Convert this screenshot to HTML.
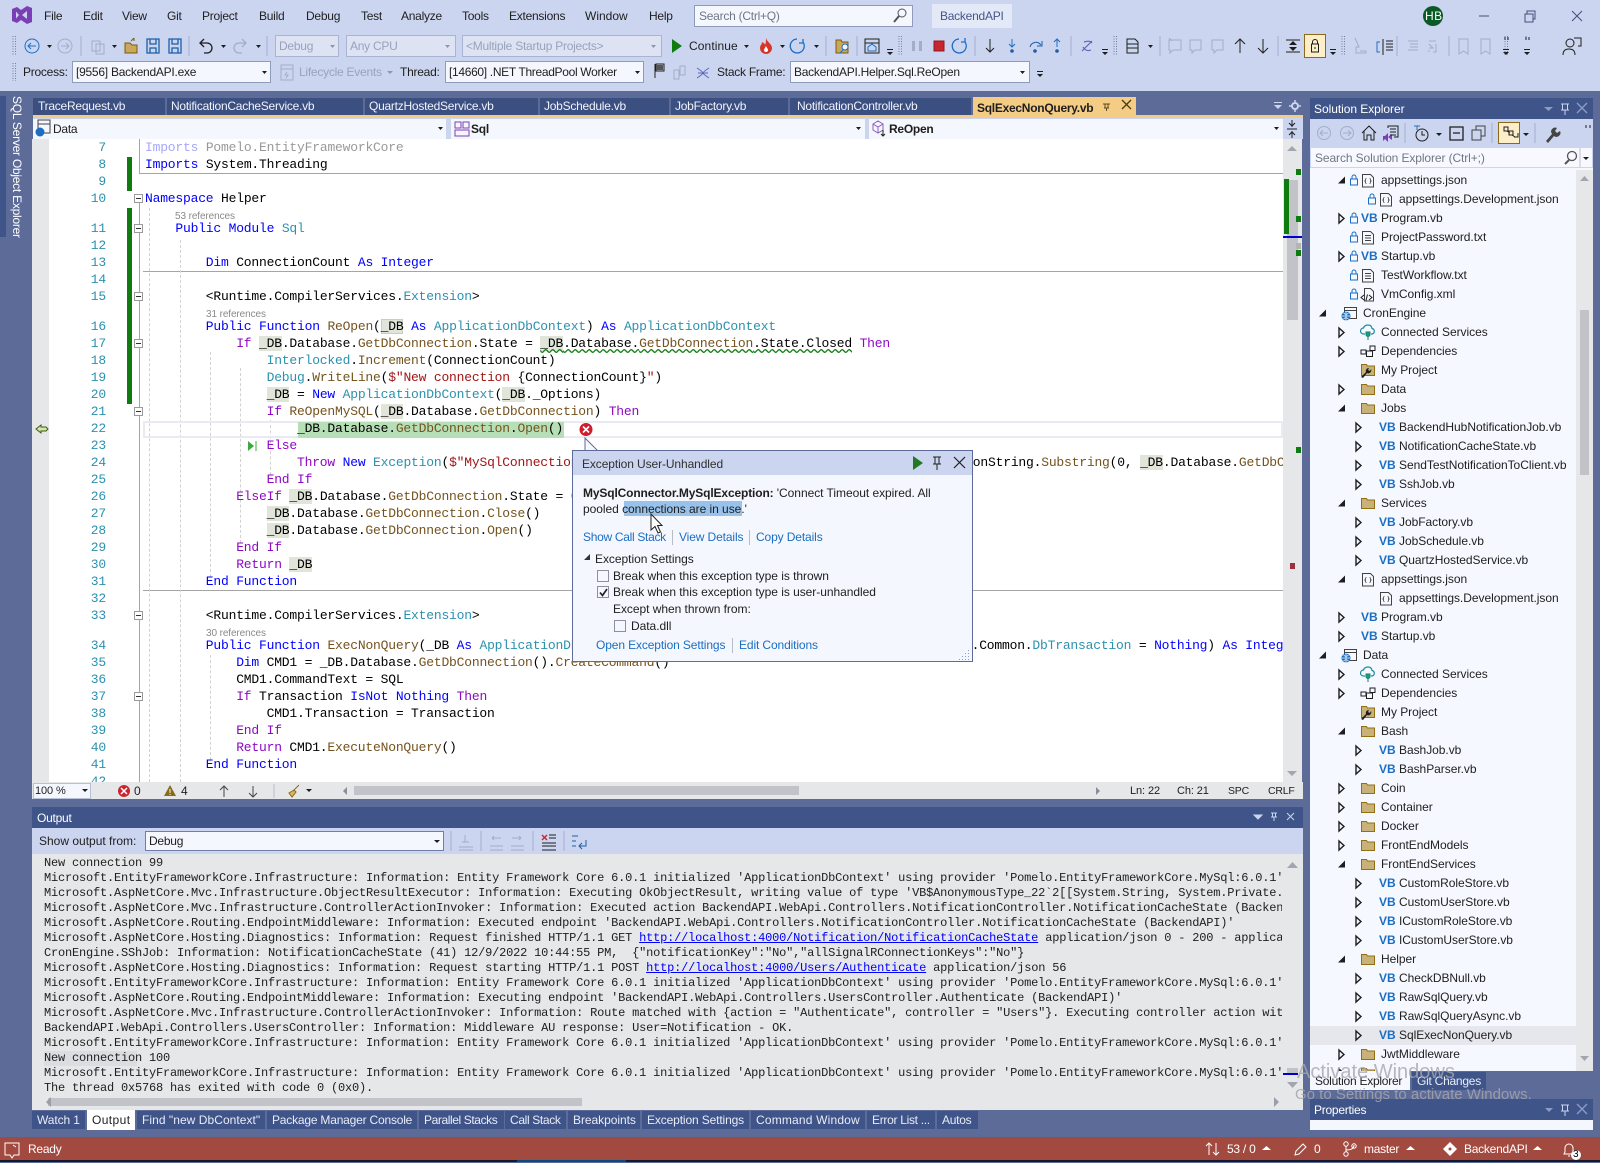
<!DOCTYPE html>
<html><head><meta charset="utf-8"><title>BackendAPI</title>
<style>
html,body{margin:0;padding:0}
body{width:1600px;height:1162px;overflow:hidden;position:relative;background:#5d6b99;font:12px/16px "Liberation Sans",sans-serif;letter-spacing:-.25px;color:#1e1e1e}
div{box-sizing:border-box}
.p{position:absolute}
.t{position:absolute;white-space:nowrap;line-height:16px}
.m{top:8px}.r2{top:38px}.r3{top:64px}
.dis{color:#98a2bc}
.cb{position:absolute;background:#f5f7fe;border:1px solid #8e9bbc;height:22px}
.cd{position:absolute;background:#dde3f3;border:1px solid #a9b4d2;height:22px}
.tab{position:absolute;top:98px;height:17px;background:#3b4f81;color:#f0f3fc;line-height:17px;white-space:nowrap}
.btab{position:absolute;top:1111px;height:18px;background:#3f5489;color:#e8ecf8;line-height:19px;padding-left:5px;white-space:nowrap}
.hdr{position:absolute;background:#3f5489;color:#fff}
#ed{position:absolute;left:0;top:0;width:1283px;height:782px;overflow:hidden;font:13px/17px "Liberation Mono",monospace;letter-spacing:-.2px;color:#000}
#ed .l{position:absolute;white-space:pre;height:17px}
#ed .n{position:absolute;left:60px;width:46px;text-align:right;color:#2b91af;height:17px}
.i0{left:145px}.i1{left:175.4px}.i2{left:205.8px}.i3{left:236.2px}.i4{left:266.6px}.i5{left:297px}
b{font-weight:normal}
b.k{color:#00f}b.y{color:#2b91af}b.f{color:#74531f}b.s{color:#a31515}b.c{color:#8f08c4}
i{font-style:normal;background:#e0e4d9}
i.o{box-shadow:inset 0 0 0 1px #c9cdbf}
.lens{position:absolute;font:10px/12px "Liberation Sans",sans-serif;color:#8a8a8a;letter-spacing:-.1px}
.g{position:absolute;width:0;border-left:1px dashed #d2d2d2}
.ob{position:absolute;left:134px;width:9px;height:9px;background:#fff;border:1px solid #9a9a9a}
.ob:after{content:"";position:absolute;left:1px;top:3px;width:5px;height:1px;background:#333}
#out{position:absolute;left:44px;top:855.5px;width:1238px;height:241px;overflow:hidden;font:12px/15px "Liberation Mono",monospace;letter-spacing:-.2px;color:#1e1e1e;white-space:pre}
#out a{color:#00f;text-decoration:underline}
#tree{position:absolute;left:1310px;top:170.5px;width:266px;height:900.5px;overflow:hidden;background:#f6f8ff;letter-spacing:-.04px}
.r{position:relative;height:19px;line-height:19px;white-space:nowrap}
.r svg{position:absolute;left:0;top:0;width:266px;height:19px}
.r span{position:absolute;top:0}
.r em{position:absolute;top:0;font:bold 12px/19px "Liberation Sans",sans-serif;color:#1b6ec2;letter-spacing:0}
.x0{left:53px}.x1{left:71px}.x2{left:89px}
.v1{left:51px}.v2{left:69px}
#pop{position:absolute;left:572px;top:450px;width:401px;height:212px;background:#f5f7fe;border:1px solid #5d6b99;letter-spacing:-.04px}
#pop .h{position:absolute;left:0;top:0;width:399px;height:24px;background:#ccd5f0}
.lnk{color:#1b6ec2;letter-spacing:-.12px}
.chk{position:absolute;width:12px;height:12px;border:1px solid #8e8e9e;background:#f5f7fe}
.sm{font-size:11px;letter-spacing:-.1px}
.sx{font-size:10.500px;letter-spacing:-.2px}
</style></head><body>
<svg width="0" height="0" style="position:absolute"><defs>
<g id="c"><path d="M-3 5l5 4.5-5 4.5z" transform="translate(0,0)" fill="#f6f8ff" stroke="#1e1e1e" stroke-width="1.4"/></g>
<g id="e"><path d="M3 5.5v7h-7z" fill="#1e1e1e"/></g>
<g id="lk"><path d="M-2 8V6a2 2 0 0 1 4 0v2" fill="none" stroke="#1b6ec2"/><rect x="-3.5" y="8" width="7" height="6" fill="#f6f8ff" stroke="#1b6ec2"/></g>
<g id="fo"><path d="M-6.500 4.500h5l1 1.500h7v8.500h-13z" fill="#c9b27a" stroke="#93700f"/></g>
<g id="js"><path d="M-5.500 3.500h8l3 3v9.500h-11z" fill="#f6f8ff" stroke="#424242"/><path d="M-1.500 7.500q-1 0-1 1v1l-.8.5.8.5v1q0 1 1 1M1.500 7.500q1 0 1 1v1l.8.5-.8.5v1q0 1-1 1" fill="none" stroke="#424242" stroke-width=".8"/></g>
<g id="tx"><path d="M-5.500 3.500h8l3 3v9.500h-11z" fill="#f6f8ff" stroke="#424242"/><path d="M-3 7.500h6M-3 10h6M-3 12.500h6" stroke="#424242"/></g>
<g id="xm"><path d="M-3.500 3.500h6l3 3v9.500h-9z" fill="#f6f8ff" stroke="#424242"/><path d="M-4 10l-3 2.500 3 2.500M1 10l3 2.500-3 2.500M-.5 9.500l-1.500 6" fill="none" stroke="#1e1e1e"/></g>
<g id="pr"><rect x="-5.500" y="3.500" width="12" height="11" fill="#f6f8ff" stroke="#424242"/><path d="M-5.500 6.500h12" stroke="#424242"/><circle cx="-4" cy="12" r="4.500" fill="#1b6ec2"/><path d="M-8 12h8M-4 7.500v9M-6.500 9q2.500 2.500 5 0M-6.500 15q2.500-2.500 5 0" fill="none" stroke="#fff" stroke-width=".7"/></g>
<g id="cs"><path d="M-3 11h-1.500a3 3 0 0 1 0-6q1-3 4.500-3t4 3.500a2.800 2.800 0 0 1 0 5.500H3" fill="none" stroke="#1c8a96" stroke-width="1.200"/><path d="M-2 9h4v2.500a2 2 0 0 1-4 0zM0 13.500V17" fill="#16a085" stroke="#16806f"/></g>
<g id="dp"><rect x="-7" y="8" width="5" height="4" fill="none" stroke="#1e1e1e"/><rect x="-1.500" y="9" width="6" height="5.500" fill="none" stroke="#1e1e1e"/><rect x="2" y="4" width="5" height="4.500" fill="none" stroke="#1e1e1e"/><path d="M-2 10h1M3 8.500v.5" stroke="#1e1e1e"/></g>
<g id="mp"><path d="M-6.500 3.500h5l1 1.500h7v9.500h-13z" fill="#c9b27a" stroke="#93700f"/><path d="M-7 16l5-5a3 3 0 0 1 3-4l-1 2 2 1 1-2a3 3 0 0 1-4 4l-4 5z" fill="#1e1e1e"/></g>
</defs></svg>

<!-- top chrome -->
<div class="p" style="left:0;top:0;width:1600px;height:91px;background:#ccd5f0"></div>
<div class="t m" style="left:44px">File</div><div class="t m" style="left:83px">Edit</div><div class="t m" style="left:122px">View</div><div class="t m" style="left:167px">Git</div><div class="t m" style="left:202px">Project</div><div class="t m" style="left:259px">Build</div><div class="t m" style="left:306px">Debug</div><div class="t m" style="left:361px">Test</div><div class="t m" style="left:401px">Analyze</div><div class="t m" style="left:462px">Tools</div><div class="t m" style="left:509px">Extensions</div><div class="t m" style="left:585px;letter-spacing:0">Window</div><div class="t m" style="left:649px">Help</div>
<div class="p" style="left:694px;top:5px;width:219px;height:22px;background:#f5f7fe;border:1px solid #8e9bbc"></div>
<div class="t m" style="left:699px;color:#6f7686">Search (Ctrl+Q)</div>
<div class="p" style="left:932px;top:4px;width:80px;height:24px;background:#e4e9f8"></div>
<div class="t m" style="left:940px;color:#46568a">BackendAPI</div>
<div class="p" style="left:1423px;top:6px;width:20px;height:20px;border-radius:50%;background:#0b5a26"></div>
<div class="t m" style="left:1425px;color:#fff;letter-spacing:.4px;font-size:12px">HB</div>

<!-- combos row 2 -->
<div class="cd" style="left:275px;top:35px;width:64px"></div><div class="t r2 dis" style="left:279px">Debug</div>
<div class="cd" style="left:346px;top:35px;width:110px"></div><div class="t r2 dis" style="left:350px">Any CPU</div>
<div class="cd" style="left:462px;top:35px;width:200px"></div><div class="t r2 dis" style="left:466px">&lt;Multiple Startup Projects&gt;</div>
<div class="t r2" style="left:689px;letter-spacing:.1px">Continue</div>
<!-- row 3 -->
<div class="t r3" style="left:23px">Process:</div>
<div class="cb" style="left:72px;top:61px;width:199px"></div><div class="t r3" style="left:76px">[9556] BackendAPI.exe</div>
<div class="t r3 dis" style="left:299px">Lifecycle Events</div>
<div class="t r3" style="left:400px">Thread:</div>
<div class="cb" style="left:445px;top:61px;width:199px"></div><div class="t r3" style="left:449px;letter-spacing:-.32px">[14660] .NET ThreadPool Worker</div>
<div class="t r3" style="left:717px">Stack Frame:</div>
<div class="cb" style="left:790px;top:61px;width:240px"></div><div class="t r3" style="left:794px">BackendAPI.Helper.Sql.ReOpen</div>

<!-- left rail -->
<div class="p" style="left:0;top:96px;width:6px;height:141px;background:#3f5489"></div>
<div class="p" style="left:9px;top:96px;color:#fff;writing-mode:vertical-rl;white-space:nowrap;line-height:15px">SQL Server Object Explorer</div>

<!-- doc tabs -->
<div class="tab" style="left:33px;width:132px;padding-left:5px">TraceRequest.vb</div>
<div class="tab" style="left:167px;width:196px;padding-left:4px">NotificationCacheService.vb</div>
<div class="tab" style="left:365px;width:173px;padding-left:4px">QuartzHostedService.vb</div>
<div class="tab" style="left:540px;width:129px;padding-left:4px">JobSchedule.vb</div>
<div class="tab" style="left:671px;width:117px;padding-left:4px">JobFactory.vb</div>
<div class="tab" style="left:790px;width:181px;padding-left:7px">NotificationController.vb</div>
<div class="p" style="left:33px;top:115px;width:1270px;height:3px;background:#f5cc84"></div>
<div class="p" style="left:973px;top:97px;width:163px;height:21px;background:#f5cc84"></div>
<div class="t" style="left:977px;top:100px;font-weight:bold;letter-spacing:-.27px">SqlExecNonQuery.vb</div>

<!-- nav bar -->
<div class="p" style="left:33px;top:118px;width:1270px;height:21px;background:#ccd5f0"></div>
<div class="p" style="left:33px;top:119px;width:413px;height:20px;background:#f5f7fe"></div>
<div class="p" style="left:451px;top:119px;width:414px;height:20px;background:#f5f7fe"></div>
<div class="p" style="left:869px;top:119px;width:414px;height:20px;background:#f5f7fe"></div>
<div class="t" style="left:53px;top:121px">Data</div>
<div class="t" style="left:471px;top:121px;font-weight:bold">Sql</div>
<div class="t" style="left:889px;top:121px;font-weight:bold">ReOpen</div>

<!-- editor -->
<div class="p" style="left:32px;top:139px;width:17px;height:643px;background:#e6e7e8"></div>
<div class="p" style="left:49px;top:139px;width:1234px;height:643px;background:#fff"></div>
<div class="p" style="left:1283px;top:139px;width:19px;height:643px;background:#e6e7e8"></div>
<div class="p" style="left:1287px;top:180px;width:11px;height:140px;background:#c2c3c9"></div>
<div class="p" style="left:1284px;top:179px;width:5px;height:55px;background:#107c10"></div>
<div class="p" style="left:1296px;top:169px;width:5px;height:6px;background:#107c10"></div>
<div class="p" style="left:1296px;top:216px;width:5px;height:6px;background:#107c10"></div>
<div class="p" style="left:1296px;top:243px;width:5px;height:6px;background:#b4b4b4"></div>
<div class="p" style="left:1296px;top:250px;width:5px;height:6px;background:#107c10"></div>
<div class="p" style="left:1283px;top:236px;width:19px;height:2px;background:#00c"></div>
<div class="p" style="left:1296px;top:447px;width:5px;height:6px;background:#107c10"></div>
<div class="p" style="left:1290px;top:563px;width:5px;height:6px;background:#9a3040"></div>

<div id="ed">
<div class="p" style="left:126.500px;top:157px;width:5.500px;height:34px;background:#107c10"></div>
<div class="p" style="left:126.500px;top:208px;width:5.500px;height:196px;background:#107c10"></div>
<div class="p" style="left:139px;top:139px;width:1px;height:34px;background:#a5a5a5"></div>
<div class="p" style="left:139px;top:199px;width:1px;height:583px;background:#a5a5a5"></div>
<div class="p" style="left:139px;top:173px;width:1144px;height:1px;background:#a5a5a5"></div>
<div class="p" style="left:143px;top:271px;width:1140px;height:1px;background:#a5a5a5"></div>
<div class="p" style="left:143px;top:590px;width:1140px;height:1px;background:#a5a5a5"></div>
<div class="ob" style="top:194px"></div><div class="ob" style="top:224px"></div><div class="ob" style="top:292px"></div><div class="ob" style="top:339px"></div><div class="ob" style="top:407px"></div><div class="ob" style="top:611px"></div><div class="ob" style="top:692px"></div>
<div class="g" style="left:148.500px;top:208px;height:574px"></div>
<div class="g" style="left:179.500px;top:240px;height:542px"></div>
<div class="g" style="left:209.500px;top:352px;height:225px"></div>
<div class="g" style="left:209.500px;top:655px;height:105px"></div>
<div class="g" style="left:240px;top:368px;height:175px"></div>
<div class="g" style="left:270px;top:420px;height:55px"></div>
<div class="p" style="left:143px;top:421px;width:1140px;height:17px;border:2px solid #eaeaf2"></div>
<div class="p" style="left:297.500px;top:422px;width:266px;height:16px;background:#b7dfb7"></div>

<div class="n" style="top:139px">7</div><div class="l i0" style="top:139px;color:#999"><b style="color:#a7a7ff">Imports</b> Pomelo.EntityFrameworkCore</div>
<div class="n" style="top:156px">8</div><div class="l i0" style="top:156px"><b class="k">Imports</b> System.Threading</div>
<div class="n" style="top:173px">9</div>
<div class="n" style="top:190px">10</div><div class="l i0" style="top:190px"><b class="k">Namespace</b> Helper</div>
<div class="lens" style="left:175px;top:211px">53 references</div>
<div class="n" style="top:220px">11</div><div class="l i1" style="top:220px"><b class="k">Public Module</b> <b class="y">Sql</b></div>
<div class="n" style="top:237px">12</div>
<div class="n" style="top:254px">13</div><div class="l i2" style="top:254px"><b class="k">Dim</b> ConnectionCount <b class="k">As Integer</b></div>
<div class="n" style="top:271px">14</div>
<div class="n" style="top:288px">15</div><div class="l i2" style="top:288px">&lt;Runtime.CompilerServices.<b class="y">Extension</b>&gt;</div>
<div class="lens" style="left:206px;top:309px">31 references</div>
<div class="n" style="top:318px">16</div><div class="l i2" style="top:318px"><b class="k">Public Function</b> <b class="f">ReOpen</b>(<i class="o">_DB</i> <b class="k">As</b> <b class="y">ApplicationDbContext</b>) <b class="k">As</b> <b class="y">ApplicationDbContext</b></div>
<div class="n" style="top:335px">17</div><div class="l i3" style="top:335px"><b class="c">If</b> <i>_DB</i>.Database.<b class="f">GetDbConnection</b>.State = <u style="text-decoration:underline wavy #107c10"><i>_DB</i>.Database.<b class="f">GetDbConnection</b>.State.Closed</u> <b class="c">Then</b></div>
<div class="n" style="top:352px">18</div><div class="l i4" style="top:352px"><b class="y">Interlocked</b>.<b class="f">Increment</b>(ConnectionCount)</div>
<div class="n" style="top:369px">19</div><div class="l i4" style="top:369px"><b class="y">Debug</b>.<b class="f">WriteLine</b>(<b class="s">$"New connection </b>{ConnectionCount}<b class="s">"</b>)</div>
<div class="n" style="top:386px">20</div><div class="l i4" style="top:386px"><i>_DB</i> = <b class="k">New</b> <b class="y">ApplicationDbContext</b>(<i>_DB</i>._Options)</div>
<div class="n" style="top:403px">21</div><div class="l i4" style="top:403px"><b class="c">If</b> <b class="f">ReOpenMySQL</b>(<i>_DB</i>.Database.<b class="f">GetDbConnection</b>) <b class="c">Then</b></div>
<div class="n" style="top:420px">22</div><div class="l i5" style="top:420px">_DB.Database.<b class="f">GetDbConnection</b>.<b class="f">Open</b>()</div>
<div class="n" style="top:437px">23</div><div class="l i4" style="top:437px"><b class="c">Else</b></div>
<div class="n" style="top:454px">24</div><div class="l i5" style="top:454px"><b class="c">Throw</b> <b class="k">New</b> <b class="y">Exception</b>(<b class="s">$"MySqlConnection</b></div>
<div class="l" style="left:912px;top:454px">ConnectionString.<b class="f">Substring</b>(0, <i>_DB</i>.Database.<b class="f">GetDbCo</b></div>
<div class="n" style="top:471px">25</div><div class="l i4" style="top:471px"><b class="c">End If</b></div>
<div class="n" style="top:488px">26</div><div class="l i3" style="top:488px"><b class="c">ElseIf</b> <i>_DB</i>.Database.<b class="f">GetDbConnection</b>.State = <b class="y">ConnectionState</b></div>
<div class="n" style="top:505px">27</div><div class="l i4" style="top:505px"><i>_DB</i>.Database.<b class="f">GetDbConnection</b>.<b class="f">Close</b>()</div>
<div class="n" style="top:522px">28</div><div class="l i4" style="top:522px"><i>_DB</i>.Database.<b class="f">GetDbConnection</b>.<b class="f">Open</b>()</div>
<div class="n" style="top:539px">29</div><div class="l i3" style="top:539px"><b class="c">End If</b></div>
<div class="n" style="top:556px">30</div><div class="l i3" style="top:556px"><b class="c">Return</b> <i>_DB</i></div>
<div class="n" style="top:573px">31</div><div class="l i2" style="top:573px"><b class="k">End Function</b></div>
<div class="n" style="top:590px">32</div>
<div class="n" style="top:607px">33</div><div class="l i2" style="top:607px">&lt;Runtime.CompilerServices.<b class="y">Extension</b>&gt;</div>
<div class="lens" style="left:206px;top:628px">30 references</div>
<div class="n" style="top:637px">34</div><div class="l i2" style="top:637px"><b class="k">Public Function</b> <b class="f">ExecNonQuery</b>(_DB <b class="k">As</b> <b class="y">ApplicationDbContext</b></div>
<div class="l" style="left:964px;top:637px">a.Common.<b class="y">DbTransaction</b> = <b class="k">Nothing</b>) <b class="k">As Integ</b></div>
<div class="n" style="top:654px">35</div><div class="l i3" style="top:654px"><b class="k">Dim</b> CMD1 = _DB.Database.<b class="f">GetDbConnection</b>().<b class="f">CreateCommand</b>()</div>
<div class="n" style="top:671px">36</div><div class="l i3" style="top:671px">CMD1.CommandText = SQL</div>
<div class="n" style="top:688px">37</div><div class="l i3" style="top:688px"><b class="c">If</b> Transaction <b class="k">IsNot Nothing</b> <b class="c">Then</b></div>
<div class="n" style="top:705px">38</div><div class="l i4" style="top:705px">CMD1.Transaction = Transaction</div>
<div class="n" style="top:722px">39</div><div class="l i3" style="top:722px"><b class="c">End If</b></div>
<div class="n" style="top:739px">40</div><div class="l i3" style="top:739px"><b class="c">Return</b> CMD1.<b class="f">ExecuteNonQuery</b>()</div>
<div class="n" style="top:756px">41</div><div class="l i2" style="top:756px"><b class="k">End Function</b></div>
<div class="n" style="top:773px">42</div>
</div>

<!-- editor status strip -->
<div class="p" style="left:32px;top:782px;width:1271px;height:17px;background:#e6e7e8"></div>
<div class="p" style="left:33px;top:783px;width:58px;height:16px;background:#f5f7fe;border:1px solid #b8c0d8"></div>
<div class="t sm" style="left:35px;top:783px">100 %</div>
<div class="t" style="left:134px;top:783px">0</div><div class="t" style="left:181px;top:783px">4</div>
<div class="p" style="left:354px;top:786px;width:445px;height:9px;background:#c2c3c9"></div>
<div class="t sm" style="left:1130px;top:783px">Ln: 22</div><div class="t sm" style="left:1177px;top:783px">Ch: 21</div><div class="t sx" style="left:1228px;top:783px">SPC</div><div class="t sx" style="left:1268px;top:783px">CRLF</div>

<!-- output -->
<div class="hdr" style="left:32px;top:807px;width:1271px;height:21px"></div>
<div class="t" style="left:37px;top:810px;color:#fff">Output</div>
<div class="p" style="left:32px;top:828px;width:1271px;height:26px;background:#ccd5f0"></div>
<div class="t" style="left:39px;top:833px;letter-spacing:0">Show output from:</div>
<div class="p" style="left:145px;top:831px;width:299px;height:20px;background:#f5f7fe;border:1px solid #6f7fa8"></div>
<div class="t" style="left:149px;top:833px">Debug</div>
<div class="p" style="left:32px;top:854px;width:1271px;height:256px;background:#e6e7e8"></div>
<div class="p" style="left:44px;top:1051px;width:93px;height:15px;background:#dcdde0"></div>
<div id="out">New connection 99
Microsoft.EntityFrameworkCore.Infrastructure: Information: Entity Framework Core 6.0.1 initialized 'ApplicationDbContext' using provider 'Pomelo.EntityFrameworkCore.MySql:6.0.1'
Microsoft.AspNetCore.Mvc.Infrastructure.ObjectResultExecutor: Information: Executing OkObjectResult, writing value of type 'VB$AnonymousType_22`2[[System.String, System.Private.
Microsoft.AspNetCore.Mvc.Infrastructure.ControllerActionInvoker: Information: Executed action BackendAPI.WebApi.Controllers.NotificationController.NotificationCacheState (Backen
Microsoft.AspNetCore.Routing.EndpointMiddleware: Information: Executed endpoint 'BackendAPI.WebApi.Controllers.NotificationController.NotificationCacheState (BackendAPI)'
Microsoft.AspNetCore.Hosting.Diagnostics: Information: Request finished HTTP/1.1 GET <a>http://localhost:4000/Notification/NotificationCacheState</a> application/json 0 - 200 - applica
CronEngine.SShJob: Information: NotificationCacheState (41) 12/9/2022 10:44:55 PM,  {"notificationKey":"No","allSignalRConnectionKeys":"No"}
Microsoft.AspNetCore.Hosting.Diagnostics: Information: Request starting HTTP/1.1 POST <a>http://localhost:4000/Users/Authenticate</a> application/json 56
Microsoft.EntityFrameworkCore.Infrastructure: Information: Entity Framework Core 6.0.1 initialized 'ApplicationDbContext' using provider 'Pomelo.EntityFrameworkCore.MySql:6.0.1'
Microsoft.AspNetCore.Routing.EndpointMiddleware: Information: Executing endpoint 'BackendAPI.WebApi.Controllers.UsersController.Authenticate (BackendAPI)'
Microsoft.AspNetCore.Mvc.Infrastructure.ControllerActionInvoker: Information: Route matched with {action = "Authenticate", controller = "Users"}. Executing controller action wit
BackendAPI.WebApi.Controllers.UsersController: Information: Middleware AU response: User=Notification - OK.
Microsoft.EntityFrameworkCore.Infrastructure: Information: Entity Framework Core 6.0.1 initialized 'ApplicationDbContext' using provider 'Pomelo.EntityFrameworkCore.MySql:6.0.1'
New connection 100
Microsoft.EntityFrameworkCore.Infrastructure: Information: Entity Framework Core 6.0.1 initialized 'ApplicationDbContext' using provider 'Pomelo.EntityFrameworkCore.MySql:6.0.1'
The thread 0x5768 has exited with code 0 (0x0).</div>
<div class="p" style="left:48px;top:1098px;width:534px;height:8px;background:#c2c3c9"></div>
<div class="p" style="left:1287px;top:1068px;width:11px;height:6px;background:#c2c3c9"></div>
<div class="p" style="left:1283px;top:1073px;width:15px;height:2px;background:#00c"></div>

<!-- bottom tabs -->
<div class="btab" style="left:32px;width:53px;letter-spacing:-.1px">Watch 1</div>
<div class="btab" style="left:87px;width:48px;background:#fff;color:#1e1e1e;top:1110px;height:20px;line-height:21px;letter-spacing:.4px">Output</div>
<div class="btab" style="left:137px;width:128px;letter-spacing:.05px">Find "new DbContext"</div>
<div class="btab" style="left:267px;width:150px;letter-spacing:-.2px">Package Manager Console</div>
<div class="btab" style="left:419px;width:85px;letter-spacing:-.4px">Parallel Stacks</div>
<div class="btab" style="left:505px;width:61px;letter-spacing:-.35px">Call Stack</div>
<div class="btab" style="left:568px;width:72px;letter-spacing:-.05px">Breakpoints</div>
<div class="btab" style="left:642px;width:107px;letter-spacing:-.13px">Exception Settings</div>
<div class="btab" style="left:751px;width:114px;letter-spacing:.18px">Command Window</div>
<div class="btab" style="left:867px;width:68px;letter-spacing:-.3px">Error List ...</div>
<div class="btab" style="left:937px;width:41px">Autos</div>

<!-- solution explorer -->
<div class="hdr" style="left:1310px;top:98px;width:283px;height:21px"></div>
<div class="t" style="left:1314px;top:101px;color:#fff;letter-spacing:-.05px">Solution Explorer</div>
<div class="p" style="left:1310px;top:119px;width:283px;height:28px;background:#ccd5f0"></div>
<div class="p" style="left:1498px;top:122px;width:22px;height:22px;background:#fbeec8;border:1px solid #8a6a1a"></div>
<div class="p" style="left:1310px;top:147px;width:283px;height:21px;background:#f8f9fe;border:1px solid #ccd5f0"></div>
<div class="t" style="left:1315px;top:150px;color:#6f7686;letter-spacing:-.1px">Search Solution Explorer (Ctrl+;)</div>
<div class="p" style="left:1310px;top:168px;width:283px;height:903px;background:#f6f8ff"></div>
<div class="p" style="left:1576px;top:170px;width:17px;height:901px;background:#e6e7e8"></div>
<div class="p" style="left:1580px;top:310px;width:9px;height:165px;background:#c2c3c9"></div>
<div id="tree">
<div class="r"><svg><use href="#e" x="32"/><use href="#lk" x="44"/><use href="#js" x="58"/></svg><span class="x1">appsettings.json</span></div>
<div class="r"><svg><use href="#lk" x="62"/><use href="#js" x="76"/></svg><span class="x2">appsettings.Development.json</span></div>
<div class="r"><svg><use href="#c" x="32"/><use href="#lk" x="44"/></svg><em class="v1">VB</em><span class="x1">Program.vb</span></div>
<div class="r"><svg><use href="#lk" x="44"/><use href="#tx" x="58"/></svg><span class="x1">ProjectPassword.txt</span></div>
<div class="r"><svg><use href="#c" x="32"/><use href="#lk" x="44"/></svg><em class="v1">VB</em><span class="x1">Startup.vb</span></div>
<div class="r"><svg><use href="#lk" x="44"/><use href="#tx" x="58"/></svg><span class="x1">TestWorkflow.txt</span></div>
<div class="r"><svg><use href="#lk" x="44"/><use href="#xm" x="58"/></svg><span class="x1">VmConfig.xml</span></div>
<div class="r"><svg><use href="#e" x="13"/><use href="#pr" x="40"/></svg><span class="x0">CronEngine</span></div>
<div class="r"><svg><use href="#c" x="32"/><use href="#cs" x="58"/></svg><span class="x1">Connected Services</span></div>
<div class="r"><svg><use href="#c" x="32"/><use href="#dp" x="58"/></svg><span class="x1">Dependencies</span></div>
<div class="r"><svg><use href="#mp" x="58"/></svg><span class="x1">My Project</span></div>
<div class="r"><svg><use href="#c" x="32"/><use href="#fo" x="58"/></svg><span class="x1">Data</span></div>
<div class="r"><svg><use href="#e" x="32"/><use href="#fo" x="58"/></svg><span class="x1">Jobs</span></div>
<div class="r"><svg><use href="#c" x="49"/></svg><em class="v2">VB</em><span class="x2">BackendHubNotificationJob.vb</span></div>
<div class="r"><svg><use href="#c" x="49"/></svg><em class="v2">VB</em><span class="x2">NotificationCacheState.vb</span></div>
<div class="r"><svg><use href="#c" x="49"/></svg><em class="v2">VB</em><span class="x2">SendTestNotificationToClient.vb</span></div>
<div class="r"><svg><use href="#c" x="49"/></svg><em class="v2">VB</em><span class="x2">SshJob.vb</span></div>
<div class="r"><svg><use href="#e" x="32"/><use href="#fo" x="58"/></svg><span class="x1">Services</span></div>
<div class="r"><svg><use href="#c" x="49"/></svg><em class="v2">VB</em><span class="x2">JobFactory.vb</span></div>
<div class="r"><svg><use href="#c" x="49"/></svg><em class="v2">VB</em><span class="x2">JobSchedule.vb</span></div>
<div class="r"><svg><use href="#c" x="49"/></svg><em class="v2">VB</em><span class="x2">QuartzHostedService.vb</span></div>
<div class="r"><svg><use href="#e" x="32"/><use href="#js" x="58"/></svg><span class="x1">appsettings.json</span></div>
<div class="r"><svg><use href="#js" x="76"/></svg><span class="x2">appsettings.Development.json</span></div>
<div class="r"><svg><use href="#c" x="32"/></svg><em class="v1">VB</em><span class="x1">Program.vb</span></div>
<div class="r"><svg><use href="#c" x="32"/></svg><em class="v1">VB</em><span class="x1">Startup.vb</span></div>
<div class="r"><svg><use href="#e" x="13"/><use href="#pr" x="40"/></svg><span class="x0">Data</span></div>
<div class="r"><svg><use href="#c" x="32"/><use href="#cs" x="58"/></svg><span class="x1">Connected Services</span></div>
<div class="r"><svg><use href="#c" x="32"/><use href="#dp" x="58"/></svg><span class="x1">Dependencies</span></div>
<div class="r"><svg><use href="#mp" x="58"/></svg><span class="x1">My Project</span></div>
<div class="r"><svg><use href="#e" x="32"/><use href="#fo" x="58"/></svg><span class="x1">Bash</span></div>
<div class="r"><svg><use href="#c" x="49"/></svg><em class="v2">VB</em><span class="x2">BashJob.vb</span></div>
<div class="r"><svg><use href="#c" x="49"/></svg><em class="v2">VB</em><span class="x2">BashParser.vb</span></div>
<div class="r"><svg><use href="#c" x="32"/><use href="#fo" x="58"/></svg><span class="x1">Coin</span></div>
<div class="r"><svg><use href="#c" x="32"/><use href="#fo" x="58"/></svg><span class="x1">Container</span></div>
<div class="r"><svg><use href="#c" x="32"/><use href="#fo" x="58"/></svg><span class="x1">Docker</span></div>
<div class="r"><svg><use href="#c" x="32"/><use href="#fo" x="58"/></svg><span class="x1">FrontEndModels</span></div>
<div class="r"><svg><use href="#e" x="32"/><use href="#fo" x="58"/></svg><span class="x1">FrontEndServices</span></div>
<div class="r"><svg><use href="#c" x="49"/></svg><em class="v2">VB</em><span class="x2">CustomRoleStore.vb</span></div>
<div class="r"><svg><use href="#c" x="49"/></svg><em class="v2">VB</em><span class="x2">CustomUserStore.vb</span></div>
<div class="r"><svg><use href="#c" x="49"/></svg><em class="v2">VB</em><span class="x2">ICustomRoleStore.vb</span></div>
<div class="r"><svg><use href="#c" x="49"/></svg><em class="v2">VB</em><span class="x2">ICustomUserStore.vb</span></div>
<div class="r"><svg><use href="#e" x="32"/><use href="#fo" x="58"/></svg><span class="x1">Helper</span></div>
<div class="r"><svg><use href="#c" x="49"/></svg><em class="v2">VB</em><span class="x2">CheckDBNull.vb</span></div>
<div class="r"><svg><use href="#c" x="49"/></svg><em class="v2">VB</em><span class="x2">RawSqlQuery.vb</span></div>
<div class="r"><svg><use href="#c" x="49"/></svg><em class="v2">VB</em><span class="x2">RawSqlQueryAsync.vb</span></div>
<div class="r" style="background:#e6e7ed"><svg><use href="#c" x="49"/></svg><em class="v2">VB</em><span class="x2">SqlExecNonQuery.vb</span></div>
<div class="r"><svg><use href="#c" x="32"/><use href="#fo" x="58"/></svg><span class="x1">JwtMiddleware</span></div>
<div class="r"><svg><use href="#c" x="32"/><use href="#fo" x="58"/></svg></div>
</div>
<div class="p" style="left:1310px;top:1071px;width:100px;height:19px;background:#f6f8ff"></div>
<div class="t" style="left:1315px;top:1073px">Solution Explorer</div>
<div class="p" style="left:1412px;top:1072px;width:74px;height:18px;background:#3f5489"></div>
<div class="t" style="left:1417px;top:1073px;color:#e8ecf8">Git Changes</div>
<div class="hdr" style="left:1310px;top:1099px;width:283px;height:21px"></div>
<div class="t" style="left:1314px;top:1102px;color:#fff">Properties</div>
<div class="p" style="left:1310px;top:1120px;width:283px;height:10px;background:#f5f7fe"></div>

<!-- status bar -->
<div class="p" style="left:0;top:1137px;width:1600px;height:23px;background:#a34a40"></div>
<div class="p" style="left:0;top:1160px;width:1600px;height:2px;background:#15192b"></div>
<div class="p" style="left:517px;top:1160px;width:109px;height:2px;background:#0a4a80"></div>
<div class="t" style="left:28px;top:1141px;color:#fff">Ready</div>
<div class="t" style="left:1227px;top:1141px;color:#fff">53 / 0</div>
<div class="t" style="left:1314px;top:1141px;color:#fff">0</div>
<div class="t" style="left:1364px;top:1141px;color:#fff">master</div>
<div class="t" style="left:1464px;top:1141px;color:#fff">BackendAPI</div>

<!-- chrome icons -->
<svg class="p" style="left:0;top:0" width="1600" height="1162" viewBox="0 0 1600 1162" fill="none">
<path d="M17 7l4 3 6-4 5 2v14l-5 2-6-4-4 3-5-2V9zM16 11.500v7l3-3.500zM27 11l-5 4 5 4z" fill="#7b3fb5" fill-rule="evenodd"/>
<path d="M13 36v19M15.500 36v19M13 63v18M15.500 63v18M899 36v19M901.500 36v19M1114 36v19M1116.500 36v19M1342 36v19M1344.500 36v19M1505 36v19M1507.500 36v19M1526 36v2" stroke="#6f7a9e" stroke-dasharray="1 1.500"/>
<path d="M81 36v20M189 36v20M267 36v20M826 36v20M857 36v20M975 36v20M1071 36v20M1160 36v20M1278 36v20M1397 36v20M1449 36v20M451 831v20M481 831v20M533 831v20M564 831v20M1405 123v20M1492 123v20M1535 123v20" stroke="#a5b0cf"/>
<circle cx="32" cy="46" r="7" stroke="#1b6ec2"/><path d="M36 46h-8M31 43l-3 3 3 3" stroke="#1b6ec2"/>
<circle cx="65" cy="46" r="7" stroke="#a3adc8"/><path d="M61 46h8M66 43l3 3-3 3" stroke="#a3adc8"/>
<path d="M47 45h5l-2.500 3zM112 45h5l-2.500 3zM221 45h5l-2.500 3zM256 45h5l-2.500 3zM744 45h5l-2.500 3zM780 45h5l-2.500 3zM814 45h5l-2.500 3zM1148 45h5l-2.500 3z" fill="#1e1e1e"/>
<path d="M330 45h5l-2.500 3zM445 45h5l-2.500 3zM651 45h5l-2.500 3zM387 71h6l-3 3z" fill="#8c96b0"/>
<path d="M262 71h5l-2.500 3zM635 71h5l-2.500 3zM1020 71h5l-2.500 3zM1037 74h6l-3 3zM1037 71h6v1h-6zM887 49h6v1h-6zM887 52h6l-3 3zM1102 49h6v1h-6zM1102 52h6l-3 3zM1330 49h6v1h-6zM1330 52h6l-3 3zM1503 49h6v1h-6zM1503 52h6l-3 3zM1524 49h6v1h-6zM1524 52h6l-3 3z" fill="#1e1e1e"/>
<path d="M92 41h8v10h-8zM96 44h8v10h-8z" stroke="#a3adc8"/>
<path d="M125 43h5l2 2h5v8h-12z" fill="#c9a85c" stroke="#7a5a12"/><path d="M131 41l3-3M134 38v3" stroke="#7a5a12"/>
<path d="M147 39h12v14h-12zM150 39v5h6v-5M150 53v-5h6v5M169 39h12v14h-12zM172 39v5h6v-5M172 53v-5h6v5" stroke="#1b5ea8" stroke-width="1.300"/>
<path d="M204 39l-4 4 4 4M200 43h7a5 5 0 0 1 0 10h-3" stroke="#1e1e1e" stroke-width="1.300"/>
<path d="M242 39l4 4-4 4M246 43h-7a5 5 0 0 0 0 10h3" stroke="#a3adc8" stroke-width="1.300"/>
<path d="M672 39l10 7-10 7z" fill="#107c10"/>
<path d="M766 38c1 4 6 6 6 10a6 6 0 0 1-12 0c0-3 2-3 2-6 2 1 3 2 3 3 1-2 1-4 1-7z" fill="#d8342a"/><path d="M766 46c1 2 2 3 2 4a2 2 0 0 1-4 0c0-1 1-2 2-4z" fill="#fff"/>
<path d="M797 39a7 7 0 1 0 6 3M803 39v4h-4" stroke="#1b6ec2" stroke-width="1.300"/>
<path d="M836 40h5l1 2h6v11h-12z" fill="#c9a85c" stroke="#7a5a12"/><circle cx="845" cy="47" r="3" fill="#f5f7fe" stroke="#1b6ec2"/><path d="M843 50l-3 3" stroke="#1b6ec2"/>
<path d="M865 39h14v14h-14zM865 43h14" stroke="#1e1e1e"/><path d="M868 51v-4l4-3 4 3v4z" fill="#ccd5f0" stroke="#1b6ec2"/>
<path d="M912 41h3v10h-3zM919 41h3v10h-3z" fill="#a3adc8"/>
<rect x="934" y="41" width="10" height="10" fill="#c8252e" stroke="#8e1a22"/>
<path d="M959 39a7 7 0 1 0 6 3M965 38v4h-4" stroke="#1b6ec2" stroke-width="1.300"/>
<path d="M990 39v13M986 48l4 4 4-4" stroke="#1e1e1e"/>
<path d="M1012 39v8M1009 44l3 3 3-3" stroke="#1b6ec2"/><circle cx="1012" cy="51" r="1.800" fill="#1b5ea8"/>
<path d="M1030 47a6 6 0 0 1 10-3l1 1M1042 41v5h-5" stroke="#1b5ea8"/><circle cx="1035" cy="51" r="1.800" fill="#1b5ea8"/>
<path d="M1057 47v-8M1054 42l3-3 3 3" stroke="#1b6ec2"/><circle cx="1057" cy="51" r="1.800" fill="#1b5ea8"/>
<path d="M1082 51l10-10M1084 42q6-2 8 1M1083 47q3 5 8 3" stroke="#5a67b8" stroke-width="1.200"/>
<path d="M1127 39h8l3 3v11h-11zM1127 44h11M1127 48h11" stroke="#1e1e1e"/>
<path d="M1169 40h12v10h-8l-3 3v-3h-1zM1169 38l3 3M1190 40h11v10h-6l-3 3v-3h-2zM1212 40h11v10h-6l-3 3v-3h-2z" stroke="#a3adc8"/>
<path d="M1240 53V39M1235 44l5-5 5 5M1263 39v14M1258 48l5 5 5-5" stroke="#1e1e1e"/>
<path d="M1286 40h14M1286 52h14" stroke="#1e1e1e"/><path d="M1293 41l-4 4h8zM1293 51l-4-4h8z" fill="#1e1e1e"/>
<rect x="1304.500" y="34.500" width="21" height="23" fill="#fbeec8" stroke="#8a6a1a"/>
<path d="M1311.500 44h7v8h-7zM1312.500 44v-2a2.500 2.500 0 0 1 5 0v2M1315 47v2" stroke="#1e1e1e"/>
<path d="M1355 38l4 9h-3v6h10v-2h-6" stroke="#a3adc8"/>
<path d="M1383 39v16M1386 41h7M1386 44h7M1386 47h7M1386 50h7" stroke="#1e1e1e"/><path d="M1380 42h-3v10h3" stroke="#1b6ec2"/>
<path d="M1408 41h10M1410 44h8M1410 47h8M1408 50h10M1429 41h7M1429 44l4 4h-4M1436 44v8h-3M1430 51h-2" stroke="#a3adc8"/>
<path d="M1459 39h9v15l-4.500-3-4.500 3zM1481 39h9v15l-4.500-3-4.500 3z" stroke="#a3adc8"/>
<path d="M1505 37v3M1508 37v3M1526 37v3M1529 37v3" stroke="#1e1e1e"/>
<circle cx="1570" cy="43" r="4" stroke="#1e1e1e"/><path d="M1563 55q0-6 6-6t6 6M1574 38h7v8h-3" stroke="#1e1e1e"/>
<path d="M1479 16h10" stroke="#424f7a"/><path d="M1525 14h8v8h-8zM1527 14v-3h8v8h-2" stroke="#424f7a"/><path d="M1572 11l10 10M1582 11l-10 10" stroke="#424f7a"/>
<circle cx="902" cy="13" r="4" stroke="#555"/><path d="M899 16l-5 6" stroke="#555" stroke-width="2"/>
<!-- row3 -->
<path d="M281 65h12v15h-12zM281 69h12M287 72l-2 3h3l-2 3" stroke="#a3adc8"/>
<path d="M655 64v14M656 64h8v7h-8z" stroke="#1e1e1e"/><path d="M656 65h7v5h-7z" fill="#555"/>
<path d="M674 70h5v9h-5zM680 66h5v9h-5z" stroke="#a3adc8"/>
<path d="M697 68q6 4 6 5t-6 5M709 68q-6 4-6 5t6 5M698 73h10" stroke="#5a67b8"/>
<!-- nav icons -->
<path d="M438 127h5l-2.500 3zM856 127h5l-2.500 3zM1274 127h5l-2.500 3z" fill="#1e1e1e"/>
<rect x="38" y="120" width="12" height="13" stroke="#424242"/><path d="M38 124h12" stroke="#424242"/><circle cx="40" cy="132" r="4.500" fill="#1b6ec2"/>
<path d="M455 122h6v6h-6zM463 122h6v6h-6zM455 130h14v6h-14z" stroke="#7b3fb5"/>
<path d="M873 124l5-3 5 3v6l-5 3-5-3zM873 124l5 3 5-3M878 127v6" stroke="#8a5fc0"/><path d="M883 130v6M881 134l2 2 2-2" stroke="#1e1e1e"/>
<path d="M1292 120v7M1292 131v7M1287 129h10M1289 123l3 3 3-3M1289 135l3-3 3 3" stroke="#1e1e1e"/>
<!-- tab icons -->
<path d="M1103 104h7M1105 104v4h3v-4M1104 108h5M1106.500 108v3" stroke="#5a4a1a"/>
<path d="M1122 100l9 9M1131 100l-9 9" stroke="#4a3a10" stroke-width="1.300"/>
<path d="M1274 102h8v1h-8zM1274 105h8l-4 4z" fill="#ccd5f0"/>
<circle cx="1295" cy="106" r="3" stroke="#ccd5f0" stroke-width="2"/><path d="M1295 100v2M1295 110v2M1289 106h2M1299 106h2" stroke="#ccd5f0" stroke-width="1.500"/>
<!-- margin -->
<path d="M36 429l5-4v2h5l2 2-2 2h-5v2z" fill="#d5e4a8" stroke="#3c5a14"/>
<path d="M248 441l6 5-6 5z" fill="#3ea83e"/><path d="M256 441v10" stroke="#3ea83e"/>
<!-- status strip -->
<path d="M82 789h6l-3 3z" fill="#1e1e1e"/>
<circle cx="124" cy="791" r="6" fill="#c8252e"/><path d="M121 788l6 6M127 788l-6 6" stroke="#fff" stroke-width="1.500"/>
<path d="M170 785l6 11h-12z" fill="#8a6a1a"/><path d="M170 789v4M170 794v1" stroke="#fff"/>
<path d="M224 797v-11M220 790l4-4 4 4M253 786v11M249 793l4 4 4-4" stroke="#444"/><path d="M274 784v14" stroke="#b8bcc8"/>
<path d="M299 785l-6 6M294 790l-5 3 3 4 4-5z" stroke="#8a6a1a" fill="#d8b85c"/><path d="M306 789h6l-3 3z" fill="#1e1e1e"/>
<path d="M347 787v8l-4-4zM1096 787v8l4-4z" fill="#8a8e9a"/>
<path d="M1287 151l5-5 5 5zM1287 771h10l-5 5z" fill="#a3a6b0"/>
<!-- output -->
<path d="M1254 815h8l-4 4zM1287 813l7 7M1294 813l-7 7" fill="#ccd5f0" stroke="#ccd5f0"/><path d="M1271 813h6M1272.500 813v4h3v-4M1271 817h6M1274 817v4" stroke="#ccd5f0"/>
<path d="M434 840h6l-3 3z" fill="#1e1e1e"/>
<path d="M459 847h14M459 850h14M465 835v7M462 842h7" stroke="#a3adc8"/>
<path d="M490 846h13M490 850h13M492 838h9M492 838l2-2M492 838l2 2M511 846h13M511 850h13M512 838h9M521 838l-2-2M521 838l-2 2" stroke="#a3adc8"/>
<path d="M542 835l5 5M547 835l-5 5" stroke="#c8252e" stroke-width="1.400"/><path d="M549 835h7M549 838h7M542 843h14M542 846h14M542 850h14" stroke="#1e1e1e"/>
<path d="M572 836h6M572 841h4M572 846h4M586 840v6h-7M582 843l-3 3 3 3" stroke="#1b5ea8"/>
<path d="M1287 868h11l-5.500-6zM1287 1082h11l-5.500 6z" fill="#a3a6b0"/>
<path d="M1274 1097v10l5-5zM51 1097v10l-5-5z" fill="#9a9ea8"/>
<!-- solution explorer -->
<path d="M1544 107h9l-4.500 4z" fill="#8e9bc4"/><path d="M1561 104h8M1562.500 104v6h5v-6M1561 110h8M1565 110v5" stroke="#ccd5f0"/><path d="M1577 103l10 10M1587 103l-10 10" stroke="#8e9bc4" stroke-width="1.400"/>
<circle cx="1324" cy="133" r="6.500" stroke="#a3adc8"/><path d="M1328 133h-8M1323 130l-3 3 3 3" stroke="#a3adc8"/>
<circle cx="1347" cy="133" r="6.500" stroke="#a3adc8"/><path d="M1343 133h8M1348 130l3 3-3 3" stroke="#a3adc8"/>
<path d="M1362 133l7-7 7 7M1364 131v9h3v-5h4v5h3v-9" stroke="#1e1e1e"/>
<path d="M1385 136l3-3v9l-3-3-2 2v-5zM1392 134l-4 3 4 3z" fill="#7b3fb5"/><path d="M1388 128v-2h10v11h-4M1390 129h6M1390 132h6M1390 135h6" stroke="#1e1e1e"/>
<circle cx="1422" cy="135" r="6" stroke="#1e1e1e"/><path d="M1422 131v4h3" stroke="#1e1e1e"/><path d="M1414 126h6M1417 126v4" stroke="#1b6ec2"/>
<path d="M1436 133h6l-3 3zM1523 133h6l-3 3z" fill="#1e1e1e"/>
<path d="M1450 127h13v13h-13zM1453 133h7" stroke="#1e1e1e" stroke-width="1.300"/><path d="M1472 130h9v10h-9zM1476 130v-4h9v10h-4" stroke="#424242"/>
<path d="M1504 127h4v4h-4zM1509 131h4v4h-4zM1514 137h4v-4M1507 131l3 2M1512 135l3 2" stroke="#1e1e1e"/>
<path d="M1546 141l6-7a4 4 0 0 1 5-6l-2 3 2 2 3-2a4 4 0 0 1-6 5l-6 7z" fill="#444"/>
<path d="M1586 125v3M1590 125v3" stroke="#1e1e1e"/>
<circle cx="1572" cy="156" r="4.500" stroke="#555" stroke-width="1.300"/><path d="M1569 160l-4 4" stroke="#555" stroke-width="2"/><path d="M1580 148v19" stroke="#b8c0d8"/><path d="M1583 157h6l-3 3z" fill="#1e1e1e"/>
<path d="M1580 181h9l-4.500-5z" fill="#a3a6b0"/><path d="M1580 1056h9l-4.500 5z" fill="#a3a6b0"/>
<path d="M1545 1108h8l-4 4z" fill="#8e9bc4"/><path d="M1561 1105h8M1562.500 1105v6h5v-6M1561 1111h8M1565 1111v5" stroke="#ccd5f0"/><path d="M1577 1104l10 10M1587 1104l-10 10" stroke="#8e9bc4" stroke-width="1.400"/>
<!-- status -->
<path d="M5 1143h14v12h-5l-2 3-2-3H5zM13 1145l3 2" stroke="#fff"/>
<path d="M1209 1155v-12M1206 1146l3-3 3 3M1216 1143v12M1213 1152l3 3 3-3" stroke="#fff"/>
<path d="M1262 1150h9l-4.500-4zM1406 1150h9l-4.500-4zM1533 1150h9l-4.500-4z" fill="#fff"/>
<path d="M1295 1155l1-4 7-7 3 3-7 7z" stroke="#fff"/>
<path d="M1346 1146v6M1346 1150q8 0 8-5" stroke="#fff"/><circle cx="1346" cy="1144" r="2.200" stroke="#fff"/><circle cx="1346" cy="1154" r="2.200" stroke="#fff"/><circle cx="1354" cy="1146" r="2.200" stroke="#fff"/>
<path d="M1450 1142l7 7-7 7-7-7z" fill="#fff"/><circle cx="1450" cy="1149" r="1.500" fill="#a34a40"/>
<path d="M1564 1154h10l-1-2v-4a4 4 0 0 0-8 0v4zM1568 1156h2" stroke="#fff"/><circle cx="1576" cy="1155" r="5" fill="#fff"/>
</svg>
<div class="t" style="left:1573px;top:1147px;font-size:10px;color:#000">3</div>

<!-- error icon + popup -->
<svg class="p" style="left:578px;top:421px" width="30" height="32"><circle cx="8" cy="8.500" r="6.500" fill="#d01c2c"/><path d="M5 5.500l6 6M11 5.500l-6 6" stroke="#fff" stroke-width="1.600"/><path d="M7 17l13 13H7z" fill="#f5f7fe" stroke="#5d6b99"/></svg>
<div id="pop">
<div class="h"></div>
<div class="t" style="left:9px;top:5px;color:#303030;letter-spacing:-.1px">Exception User-Unhandled</div>
<svg class="p" style="left:330px;top:0" width="70" height="24" fill="none"><path d="M10 5l10 7-10 7z" fill="#217a21"/><path d="M30 6h8M32 6v7h4V6M30 13h8M34 13v6" stroke="#1e1e1e"/><path d="M51 6l11 11M62 6L51 17" stroke="#1e1e1e" stroke-width="1.200"/></svg>
<div class="p" style="left:51px;top:50px;width:118px;height:15px;background:#99c2ea"></div>
<div class="t" style="left:10px;top:34px"><span style="font-weight:bold;letter-spacing:-.14px">MySqlConnector.MySqlException:</span> 'Connect Timeout expired. All</div>
<div class="t" style="left:10px;top:50px">pooled connections are in use.'</div>
<div class="t lnk" style="left:10px;top:78px;letter-spacing:-.3px">Show Call Stack</div>
<div class="p" style="left:99px;top:79px;width:1px;height:15px;background:#b8bcc8"></div>
<div class="t lnk" style="left:106px;top:78px">View Details</div>
<div class="p" style="left:176px;top:79px;width:1px;height:15px;background:#b8bcc8"></div>
<div class="t lnk" style="left:183px;top:78px">Copy Details</div>
<svg class="p" style="left:10px;top:102px" width="8" height="8"><path d="M7 1v6H1z" fill="#333"/></svg>
<div class="t" style="left:22px;top:100px">Exception Settings</div>
<div class="chk" style="left:24px;top:119px"></div>
<div class="t" style="left:40px;top:117px">Break when this exception type is thrown</div>
<div class="chk" style="left:24px;top:135px"></div>
<svg class="p" style="left:25px;top:136px" width="11" height="11" fill="none"><path d="M2 5.500l2.500 3L9 2" stroke="#222" stroke-width="1.700"/></svg>
<div class="t" style="left:40px;top:133px">Break when this exception type is user-unhandled</div>
<div class="t" style="left:40px;top:150px">Except when thrown from:</div>
<div class="chk" style="left:41px;top:169px"></div>
<div class="t" style="left:58px;top:167px">Data.dll</div>
<div class="t lnk" style="left:23px;top:186px">Open Exception Settings</div>
<div class="p" style="left:159px;top:187px;width:1px;height:15px;background:#b8bcc8"></div>
<div class="t lnk" style="left:166px;top:186px">Edit Conditions</div>
<svg class="p" style="left:386px;top:198px" width="12" height="12"><path d="M9 1h1v1H9zM6 4h1v1H6zM9 4h1v1H9zM3 7h1v1H3zM6 7h1v1H6zM9 7h1v1H9zM0 10h1v1H0zM3 10h1v1H3zM6 10h1v1H6zM9 10h1v1H9z" fill="#8e9bc4"/></svg>
</div>
<svg class="p" style="left:650px;top:513px" width="14" height="22"><path d="M1 1v16l4-3.500 3 6.500 2.500-1-3-6.500H12z" fill="#fff" stroke="#222" stroke-width="1"/></svg>

<!-- watermark -->
<div class="t" style="left:1297px;top:1060px;font-size:20px;line-height:24px;letter-spacing:0;color:rgba(165,165,172,.8)">Activate Windows</div>
<div class="t" style="left:1295px;top:1086px;font-size:15px;line-height:18px;letter-spacing:0;color:rgba(165,165,172,.85)">Go to Settings to activate Windows.</div>
</body></html>
